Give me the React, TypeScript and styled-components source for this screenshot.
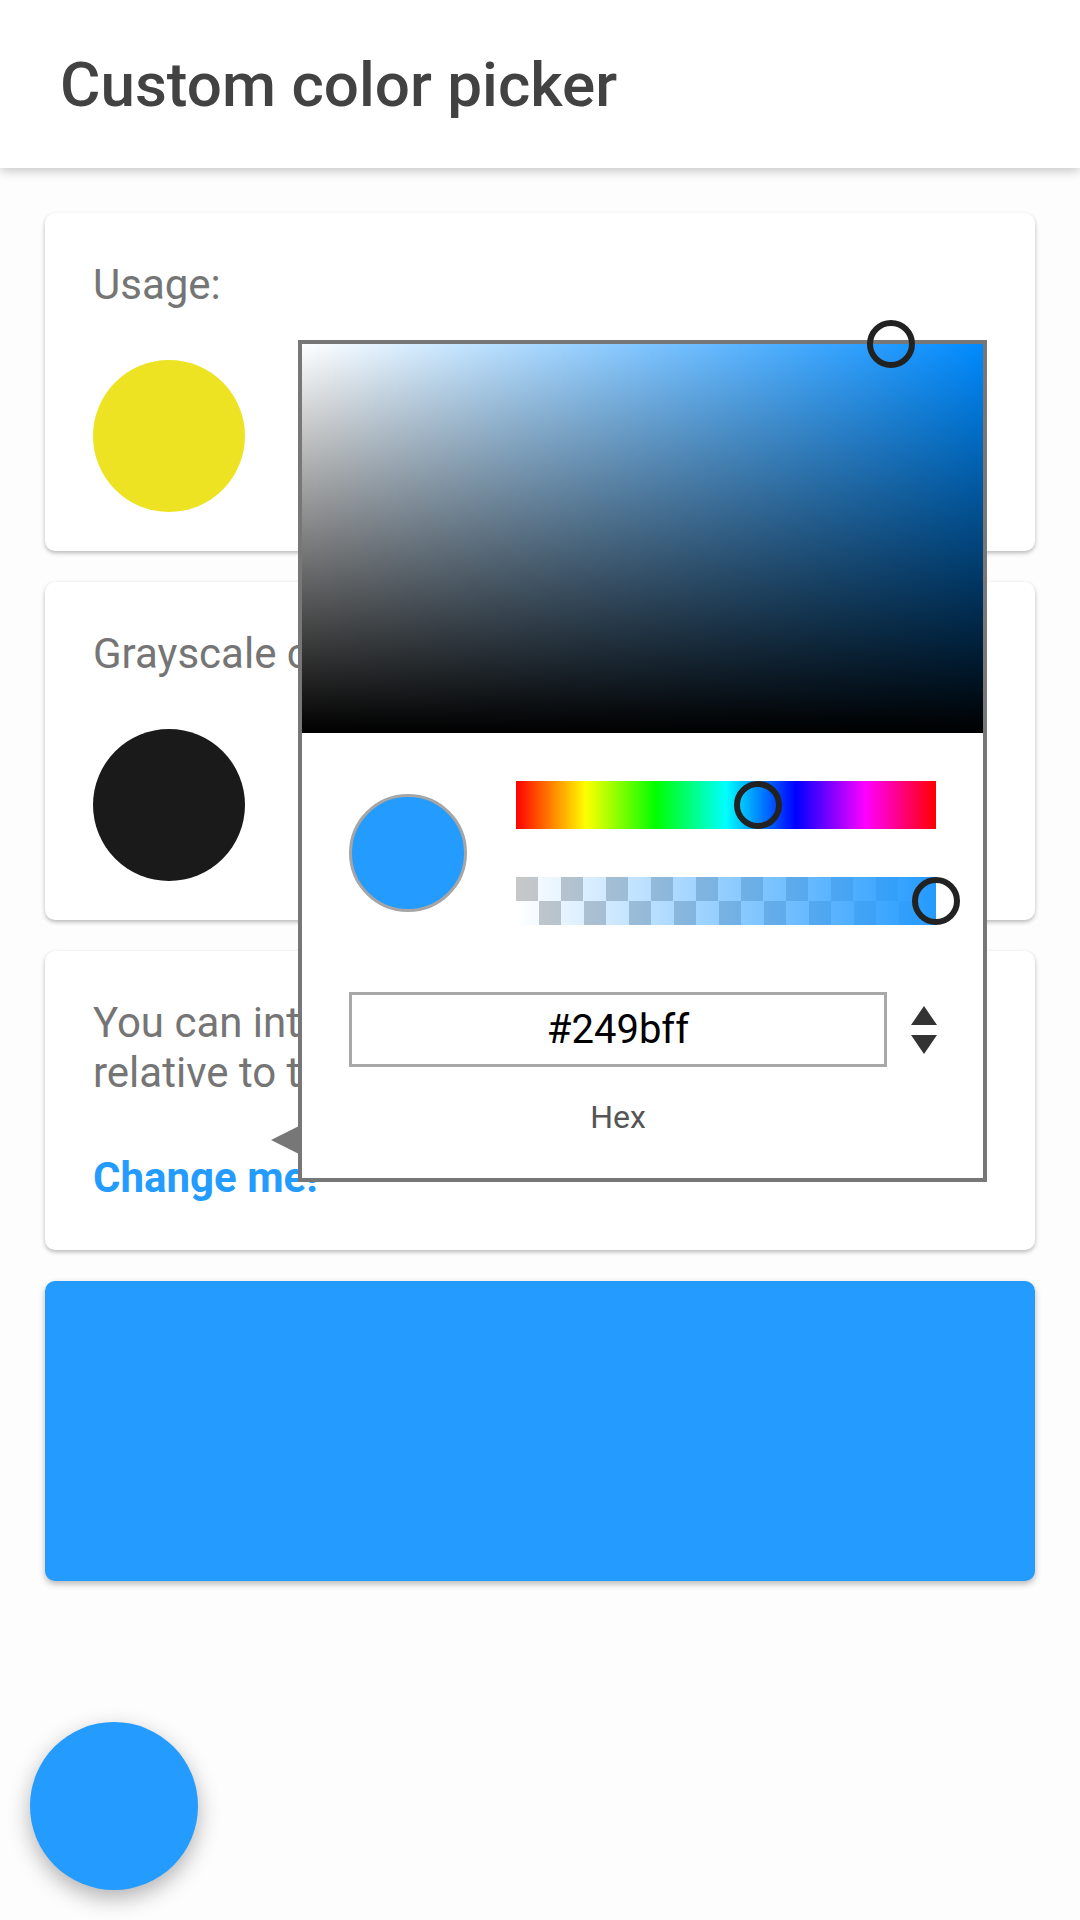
import React from "react";
import styled, { createGlobalStyle } from "styled-components";

const ACCENT = "#249bff";
const HUE = 207.4;
const SATURATION = 0.865;
const ALPHA = 1;

const GlobalStyle = createGlobalStyle`
  * {
    box-sizing: border-box;
  }

  html,
  body {
    margin: 0;
    padding: 0;
    background: #fdfdfd;
  }

  body {
    font-family: Roboto, "Noto Sans", Arial, sans-serif;
  }
`;

const Page = styled.div`
  position: relative;
  width: 1080px;
  min-height: 1920px;
  overflow: hidden;
  background: #fdfdfd;
`;

const Header = styled.header`
  position: relative;
  z-index: 1;
  height: 168px;
  display: flex;
  align-items: center;
  padding-left: 60px;
  background: #ffffff;
  box-shadow: 0 3px 10px rgba(0, 0, 0, 0.22);
`;

const Title = styled.h1`
  margin: 0;
  font-size: 62px;
  font-weight: 500;
  color: #424242;
`;

const Content = styled.main`
  display: flex;
  flex-direction: column;
  gap: 31px;
  padding: 45px 45px 0;
`;

const Card = styled.section`
  background: #ffffff;
  border-radius: 10px;
  padding: 47px 48px 39px;
  box-shadow: 0 2px 4px rgba(0, 0, 0, 0.28);
`;

const Label = styled.p`
  margin: 0;
  font-size: 42px;
  line-height: 50px;
  color: #757575;
`;

const Swatch = styled.div<{ $color: string }>`
  width: 152px;
  height: 152px;
  margin-top: 50px;
  border-radius: 50%;
  background: ${(p) => p.$color};
`;

const ChangeLink = styled.a`
  display: block;
  margin-top: 55px;
  padding-bottom: 8px;
  font-size: 42px;
  line-height: 50px;
  font-weight: 700;
  color: ${ACCENT};
  text-decoration: none;
`;

const ColorBlock = styled.div`
  height: 300px;
  border-radius: 10px;
  background: ${ACCENT};
  box-shadow: 0 3px 6px rgba(0, 0, 0, 0.28);
`;

const Fab = styled.button`
  position: absolute;
  left: 30px;
  top: 1722px;
  width: 168px;
  height: 168px;
  border: none;
  border-radius: 50%;
  background: ${ACCENT};
  box-shadow: 0 8px 22px rgba(0, 0, 0, 0.3);
`;

const Popover = styled.div`
  position: absolute;
  left: 298px;
  top: 340px;
  z-index: 2;
  width: 689px;
  height: 842px;
  border: 4px solid #777777;
  background: #ffffff;

  &::before {
    content: "";
    position: absolute;
    left: -31px;
    top: 782px;
    border-right: 28px solid #777777;
    border-top: 14px solid transparent;
    border-bottom: 14px solid transparent;
  }
`;

const SatValArea = styled.div<{ $hue: number }>`
  position: relative;
  height: 389px;
  background: linear-gradient(to top, #000000, rgba(0, 0, 0, 0)),
    linear-gradient(to right, #ffffff, rgba(255, 255, 255, 0)),
    hsl(${(p) => p.$hue}, 100%, 50%);
`;

const Knob = styled.div<{ $size: number }>`
  position: absolute;
  width: ${(p) => p.$size}px;
  height: ${(p) => p.$size}px;
  border: 6px solid #222222;
  border-radius: 50%;
`;

const ControlsRow = styled.div`
  display: flex;
  align-items: center;
  gap: 49px;
  margin: 48px 46px 0 47px;
`;

const Preview = styled.div`
  width: 118px;
  height: 118px;
  border-radius: 50%;
  border: 3px solid #a6a6a6;
  background: ${ACCENT};
`;

const Sliders = styled.div`
  display: flex;
  flex-direction: column;
  gap: 48px;
  width: 420px;
`;

const HueTrack = styled.div`
  position: relative;
  height: 48px;
  background: linear-gradient(
    to right,
    #ff0000 0%,
    #ffff00 16.6%,
    #00ff00 33.3%,
    #00ffff 50%,
    #0000ff 66.6%,
    #ff00ff 83.3%,
    #ff0000 100%
  );
`;

const AlphaTrack = styled.div`
  position: relative;
  height: 48px;
  background: linear-gradient(to right, rgba(36, 155, 255, 0), ${ACCENT}),
    repeating-conic-gradient(#ffffff 0% 25%, #c8c8c8 0% 50%) 0 0 / 45px 48px;
`;

const InputRow = styled.div`
  display: flex;
  align-items: center;
  gap: 24px;
  margin-top: 67px;
  padding-left: 47px;
`;

const HexInput = styled.input`
  width: 538px;
  height: 75px;
  border: 3px solid #a8a8a8;
  border-radius: 0;
  outline: none;
  background: #ffffff;
  font-family: Roboto, "Noto Sans", Arial, sans-serif;
  font-size: 40px;
  color: #000000;
  text-align: center;
`;

const HexLabel = styled.div`
  width: 538px;
  margin: 31px 0 0 47px;
  font-size: 32px;
  line-height: 38px;
  color: #555555;
  text-align: center;
`;

const Stepper = () => (
  <svg width="26" height="48" viewBox="0 0 26 48">
    <polygon points="13,0 26,19 0,19" fill="#333333" />
    <polygon points="0,29 26,29 13,48" fill="#333333" />
  </svg>
);

const ColorPopover = () => (
  <Popover>
    <SatValArea $hue={HUE}>
      <Knob
        $size={48}
        style={{ left: `calc(${SATURATION * 100}% - 24px)`, top: -24 }}
      />
    </SatValArea>

    <ControlsRow>
      <Preview />
      <Sliders>
        <HueTrack>
          <Knob $size={48} style={{ left: `calc(${(HUE / 360) * 100}% - 24px)`, top: 0 }} />
        </HueTrack>
        <AlphaTrack>
          <Knob $size={48} style={{ left: `calc(${ALPHA * 100}% - 24px)`, top: 0 }} />
        </AlphaTrack>
      </Sliders>
    </ControlsRow>

    <InputRow>
      <HexInput readOnly value="#249bff" />
      <Stepper />
    </InputRow>
    <HexLabel>Hex</HexLabel>
  </Popover>
);

export default function App() {
  return (
    <Page>
      <GlobalStyle />
      <Header>
        <Title>Custom color picker</Title>
      </Header>

      <Content>
        <Card>
          <Label>Usage:</Label>
          <Swatch $color="#ede322" />
        </Card>

        <Card>
          <Label>Grayscale colors:</Label>
          <Swatch $color="#1a1a1a" />
        </Card>

        <Card>
          <Label>
            You can integrate the color picker in a popover relative to the
            target element:
          </Label>
          <ChangeLink href="#">Change me!</ChangeLink>
        </Card>

        <ColorBlock />
      </Content>

      <ColorPopover />
      <Fab aria-label="Pick color" />
    </Page>
  );
}
